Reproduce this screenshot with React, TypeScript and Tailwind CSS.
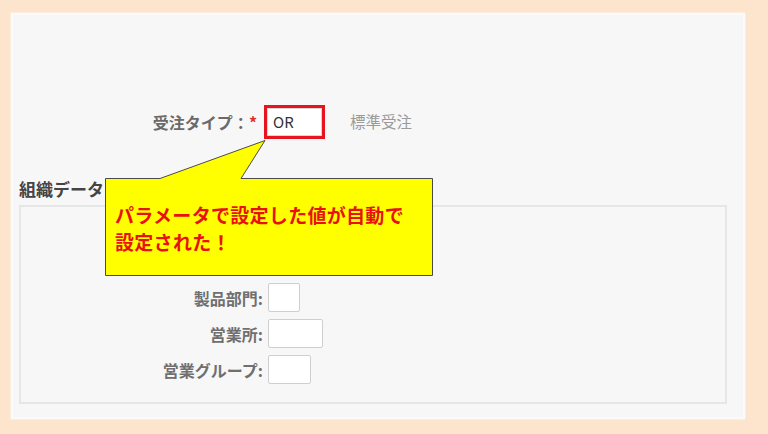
import React from 'react'

const jp = { fontFamily: '"Noto Sans CJK JP", "Noto Sans", sans-serif' }

/* =====================
   FIELD ROW
===================== */
const Field = ({ label, width }: { label: string; width: string }) => (
  <div className="flex items-center h-[29px]">
    <div className="w-[242px] text-right text-[16px] font-bold text-[#6f6f6f] leading-none">{label}</div>
    <div className={`ml-[5px] h-[29px] ${width} bg-white border border-[#cfcfcf] rounded-[2px]`} />
  </div>
)

export default function App() {
  return (
    <div className="relative w-[768px] h-[434px] bg-[#fde5cd] overflow-hidden" style={jp}>
      {/* CARD */}
      <div className="ml-[11px] pt-[13px]">
        <div className="w-[734px] h-[406px] bg-[#f7f7f7] border-2 border-[#fbfbfb] shadow-[0_0_2px_rgba(255,255,255,0.9)]">
          {/* ORDER TYPE */}
          <div className="flex items-center mt-[90px]">
            <div className="w-[244px] text-right text-[16px] font-bold text-[#6a6a6a] leading-none">
              受注タイプ：<span className="text-[#e0302a]">*</span>
            </div>
            <div className="ml-[7px] w-[61px] h-[34px] border-[3px] border-[#e5141e] bg-white flex items-center">
              <div className="w-full h-full border border-[#d6d6d6] flex items-center pl-[5px] text-[15px] text-[#333]">
                OR
              </div>
            </div>
            <div className="ml-[25px] text-[15.5px] text-[#9a9a9a]">標準受注</div>
          </div>

          {/* ORG DATA */}
          <div className="ml-[6px] mt-[41px] text-[17px] font-bold text-[#444] leading-none">組織データ</div>
          <div className="ml-[6px] mt-[8px] w-[708px] h-[199px] border-2 border-[#e6e6e6] pt-[4px] flex flex-col gap-[7px]">
            <Field label="" width="w-[31px]" />
            <Field label="" width="w-[31px]" />
            <Field label="製品部門:" width="w-[32px]" />
            <Field label="営業所:" width="w-[55px]" />
            <Field label="営業グループ:" width="w-[43px]" />
          </div>
        </div>
      </div>

      {/* CALLOUT */}
      <div className="absolute left-[105px] top-[140px] w-[329px] h-[137px]">
        <svg width="329" height="137" viewBox="0 0 329 137" className="absolute inset-0">
          <path
            d="M0.5 38.5 H55 L160 0.5 L136 38.5 H327.5 V135.5 H0.5 Z"
            fill="#ffff00"
            stroke="#4a4a4a"
            strokeWidth="1"
          />
        </svg>
        <div className="absolute left-[10px] top-[61px] text-[19px] font-bold leading-[27px] text-[#e8110f] tracking-[0.3px]">
          パラメータで設定した値が自動で
          <br />
          設定された！
        </div>
      </div>
    </div>
  )
}
